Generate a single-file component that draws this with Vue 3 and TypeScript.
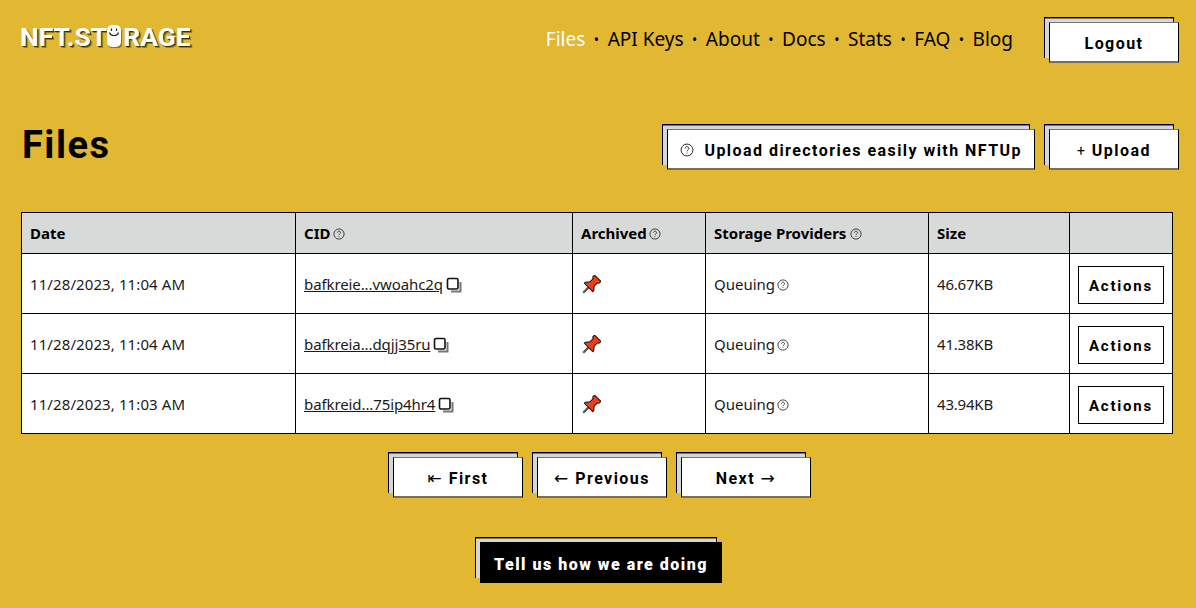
<script setup lang="ts">
interface FileRow {
  date: string
  cid: string
  size: string
}

const navLinks = ['Files', 'API Keys', 'About', 'Docs', 'Stats', 'FAQ', 'Blog']

const rows: FileRow[] = [
  { date: '11/28/2023, 11:04 AM', cid: 'bafkreie...vwoahc2q', size: '46.67KB' },
  { date: '11/28/2023, 11:04 AM', cid: 'bafkreia...dqjj35ru', size: '41.38KB' },
  { date: '11/28/2023, 11:03 AM', cid: 'bafkreid...75ip4hr4', size: '43.94KB' },
]
</script>

<template>
  <div class="page">
    <header class="site-header">
      <a class="logo">
        <span>NFT.ST</span>
        <svg class="logo-face" viewBox="0 0 15 23" width="15" height="23">
          <rect x="1" y="3" width="14" height="20" rx="4" fill="#8f771f" />
          <rect x="0" y="0" width="14" height="22" rx="5" fill="#fff" />
          <path d="M4.5 3.5v2.5M9.5 3.5v2.5" stroke="#222" stroke-width="1.2" />
          <path d="M2.5 7.5c1 4 8 4 9 0" fill="none" stroke="#222" stroke-width="1.2" />
        </svg>
        <span>RAGE</span>
      </a>
      <nav class="site-nav">
        <template v-for="(link, i) in navLinks" :key="link">
          <span v-if="i > 0" class="dot">•</span>
          <a :class="{ active: i === 0 }">{{ link }}</a>
        </template>
      </nav>
      <button class="btn logout">Logout</button>
    </header>

    <main class="content">
      <div class="title-row">
        <h1>Files</h1>
        <div class="title-actions">
          <button class="btn nftup">
            <svg class="help help-lg" viewBox="0 0 16 16">
              <circle cx="8" cy="8" r="6.8" />
              <path d="M5.9 6.3c0-1.3 1-2 2.1-2s2.1.7 2.1 1.9c0 1.6-2.1 1.6-2.1 3.3" />
              <path d="M8 11v1" />
            </svg>
            Upload directories easily with NFTUp
          </button>
          <button class="btn upload"><span class="plus">+</span> Upload</button>
        </div>
      </div>

      <table class="files">
        <colgroup>
          <col class="c-date" />
          <col class="c-cid" />
          <col class="c-arch" />
          <col class="c-prov" />
          <col class="c-size" />
          <col />
        </colgroup>
        <thead>
          <tr>
            <th>Date</th>
            <th>
              CID
              <svg class="help tight" viewBox="0 0 16 16">
                <circle cx="8" cy="8" r="6.8" />
                <path d="M5.9 6.3c0-1.3 1-2 2.1-2s2.1.7 2.1 1.9c0 1.6-2.1 1.6-2.1 3.3" />
                <path d="M8 11v1" />
              </svg>
            </th>
            <th>
              Archived
              <svg class="help tight" viewBox="0 0 16 16">
                <circle cx="8" cy="8" r="6.8" />
                <path d="M5.9 6.3c0-1.3 1-2 2.1-2s2.1.7 2.1 1.9c0 1.6-2.1 1.6-2.1 3.3" />
                <path d="M8 11v1" />
              </svg>
            </th>
            <th>
              Storage Providers
              <svg class="help" viewBox="0 0 16 16">
                <circle cx="8" cy="8" r="6.8" />
                <path d="M5.9 6.3c0-1.3 1-2 2.1-2s2.1.7 2.1 1.9c0 1.6-2.1 1.6-2.1 3.3" />
                <path d="M8 11v1" />
              </svg>
            </th>
            <th>Size</th>
            <th></th>
          </tr>
        </thead>
        <tbody>
          <tr v-for="row in rows" :key="row.cid">
            <td class="date">{{ row.date }}</td>
            <td>
              <a class="cid">{{ row.cid }}</a>
              <svg class="copy" viewBox="0 0 16 16">
                <path class="copy-back" d="M14.5 5v9.5H5" />
                <rect x="1.5" y="1.5" width="10.5" height="10.5" rx="1.5" />
              </svg>
            </td>
            <td>
              <svg class="pin" viewBox="0 0 20 20">
                <g transform="rotate(45 10 10)">
                  <path class="pin-needle" d="M10 13v8" />
                  <path
                    class="pin-head"
                    d="M5.5 0.5h9v2.5l-1.5 1v4.5l3 3.5v1.5h-12v-1.5l3-3.5V4l-1.5-1z"
                  />
                </g>
              </svg>
            </td>
            <td>
              Queuing
              <svg class="help tight" viewBox="0 0 16 16">
                <circle cx="8" cy="8" r="6.8" />
                <path d="M5.9 6.3c0-1.3 1-2 2.1-2s2.1.7 2.1 1.9c0 1.6-2.1 1.6-2.1 3.3" />
                <path d="M8 11v1" />
              </svg>
            </td>
            <td class="size">{{ row.size }}</td>
            <td><button class="actions">Actions</button></td>
          </tr>
        </tbody>
      </table>

      <div class="pager">
        <button class="btn"><span class="arrow">⇤</span> First</button>
        <button class="btn"><span class="arrow">←</span> Previous</button>
        <button class="btn">Next <span class="arrow">→</span></button>
      </div>

      <div class="feedback">
        <button class="btn dark">Tell us how we are doing</button>
      </div>
    </main>
  </div>
</template>

<style>
html,
body {
  margin: 0;
  background: #e2b731;
}
</style>

<style scoped>
.page {
  min-height: 608px;
  background: #e2b731;
  color: #000;
  font-family: 'Noto Sans', 'Open Sans', sans-serif;
  overflow: hidden;
}

.site-header {
  display: flex;
  align-items: flex-start;
  height: 63px;
  padding: 23px 17px 0 20px;
  box-sizing: border-box;
}

.logo {
  display: flex;
  align-items: center;
  height: 30px;
  margin: -2px auto 0 0;
  color: #fff;
  font-family: 'Roboto', sans-serif;
  font-size: 26.5px;
  font-weight: 700;
  letter-spacing: 0;
  text-shadow:
    1px 1px 0 #3a3208,
    2px 2px 0 #9a7f1e;
}

.logo-face {
  margin: 1px 1px 0 0;
}

.site-nav {
  display: flex;
  align-items: center;
  height: 34px;
  margin: -1px 36px 0 0;
  font-size: 19px;
}

.site-nav .active {
  color: #fff;
}

.dot {
  width: 22.3px;
  text-align: center;
  font-size: 14px;
}

/* the grey card behind every button is a shadow of the button itself */
.btn {
  width: 130px;
  height: 41px;
  padding: 3px 0 0;
  box-sizing: border-box;
  background: #fff;
  color: #000;
  border: solid #000;
  border-width: 0 1px;
  border-top: 1px solid #777;
  border-bottom: 2px solid #776f55;
  box-shadow:
    -5px -4px 0 -1px #d6d6d6,
    -5px -5px 0 -1px #777,
    -5px -5px 0 0 #000;
  font-family: 'Roboto', sans-serif;
  font-size: 16px;
  font-weight: 700;
  letter-spacing: 1.45px;
  white-space: nowrap;
}

.logout {
  margin-top: -1px;
}

.content {
  padding: 0 17px 0 21px;
}

.title-row {
  display: flex;
  align-items: flex-start;
  justify-content: space-between;
  height: 149px;
  padding-top: 66px;
  box-sizing: border-box;
}

h1 {
  margin: 0 0 0 1px;
  font-family: 'Roboto', sans-serif;
  font-size: 38px;
  font-weight: 700;
  letter-spacing: 1.5px;
  line-height: 32px;
}

.title-actions {
  display: flex;
  gap: 14px;
}

.nftup {
  width: 368px;
}

.upload .plus {
  font-weight: 400;
  font-size: 14px;
}

.help {
  width: 12px;
  height: 12px;
  vertical-align: -1px;
  fill: none;
  stroke: #222;
  stroke-width: 1.1;
}

.help.tight {
  margin-left: -1.5px;
}

.help-lg {
  width: 14px;
  height: 14px;
  margin-right: 5px;
}

.files {
  width: 1152px;
  table-layout: fixed;
  border-collapse: collapse;
  background: #fff;
  font-size: 15px;
}

.c-date {
  width: 274px;
}

.c-cid {
  width: 277px;
}

.c-arch {
  width: 133px;
}

.c-prov {
  width: 223px;
}

.c-size {
  width: 141px;
}

th,
td {
  padding: 0 8px;
  border: 1px solid #000;
  text-align: left;
}

th {
  height: 40px;
  background: #d8dad9;
  font-weight: 700;
}

td {
  height: 59px;
  color: #1a1a1a;
}

.date {
  letter-spacing: 0.1px;
}

.size {
  letter-spacing: -0.2px;
}

.cid {
  letter-spacing: -0.1px;
  text-decoration: underline;
}

.copy {
  width: 16px;
  height: 16px;
  margin-left: 3px;
  vertical-align: -3px;
  fill: none;
  stroke: #111;
  stroke-width: 1.6;
}

.copy-back {
  stroke: #777;
  stroke-width: 2;
}

.pin {
  display: block;
  width: 20px;
  height: 20px;
  margin-top: 2px;
}

.pin-needle {
  stroke: #555;
  stroke-width: 2.2;
}

.pin-head {
  fill: #e8401a;
  stroke: #111;
  stroke-width: 1;
  stroke-linejoin: round;
}

.actions {
  display: block;
  width: 86px;
  height: 38px;
  margin-top: 2px;
  padding: 2px 0 0;
  background: #fff;
  border: 1px solid #000;
  font-family: 'Roboto', sans-serif;
  font-size: 15px;
  font-weight: 700;
  letter-spacing: 1.8px;
}

.pager {
  display: flex;
  justify-content: center;
  gap: 14px;
  margin: 23px 0 0 4px;
}

.arrow {
  font-family: 'DejaVu Sans', sans-serif;
  font-weight: 400;
  font-size: 17px;
  line-height: 1;
}

.feedback {
  display: flex;
  justify-content: center;
  margin: 44px 0 0 2px;
}

.btn.dark {
  width: 242px;
  color: #fff;
  background: #000;
  border: 0;
  font-weight: 900;
  letter-spacing: 1.5px;
}
</style>
